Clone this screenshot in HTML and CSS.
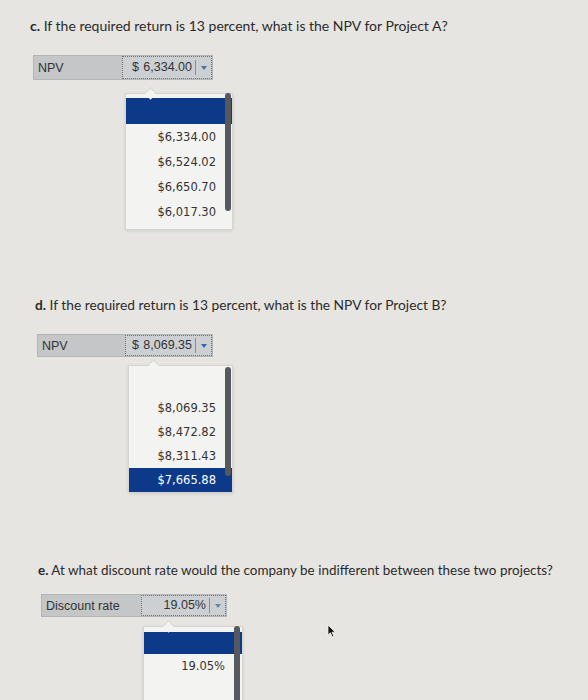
FILE: index.html
```html
<!DOCTYPE html>
<html lang="en">
<head>
<meta charset="utf-8">
<title>NPV questions</title>
<link rel="stylesheet" href="styles.css">
</head>
<body>
<main class="page">
  <section class="q q-c">
    <p class="q-text"><b>c.</b> If the required return is 13 percent, what is the NPV for Project A?</p>
    <div class="field">
      <div class="field-label">NPV</div>
      <div class="field-value"><span class="val">$ 6,334.00</span><span class="arrow"></span></div>
    </div>
    <div class="menu">
      <ul class="opts">
        <li class="opt opt-blank sel"></li>
        <li class="opt">$6,334.00</li>
        <li class="opt">$6,524.02</li>
        <li class="opt">$6,650.70</li>
        <li class="opt">$6,017.30</li>
      </ul>
      <div class="scroll"></div>
    </div>
  </section>

  <section class="q q-d">
    <p class="q-text"><b>d.</b> If the required return is 13 percent, what is the NPV for Project B?</p>
    <div class="field">
      <div class="field-label">NPV</div>
      <div class="field-value"><span class="val">$ 8,069.35</span><span class="arrow"></span></div>
    </div>
    <div class="menu">
      <ul class="opts">
        <li class="opt opt-blank"></li>
        <li class="opt">$8,069.35</li>
        <li class="opt">$8,472.82</li>
        <li class="opt">$8,311.43</li>
        <li class="opt sel">$7,665.88</li>
      </ul>
      <div class="scroll"></div>
    </div>
  </section>

  <section class="q q-e">
    <p class="q-text"><b>e.</b> At what discount rate would the company be indifferent between these two projects?</p>
    <div class="field">
      <div class="field-label">Discount rate</div>
      <div class="field-value"><span class="val">19.05%</span><span class="arrow"></span></div>
    </div>
    <div class="menu">
      <ul class="opts">
        <li class="opt opt-blank sel"></li>
        <li class="opt">19.05%</li>
        <li class="opt"></li>
      </ul>
      <div class="scroll"></div>
    </div>
  </section>

  <svg class="cursor" width="9" height="14" viewBox="0 0 9 14" aria-hidden="true">
    <path d="M1 1 L1 11 L3.4 8.8 L5.2 12.8 L6.8 12.1 L5 8.2 L8.2 8.2 Z" fill="#111" stroke="#f4f4f4" stroke-width="0.8"/>
  </svg>
</main>
</body>
</html>
```

FILE: styles.css
```css
html, body {
  margin: 0;
  height: 100%;
  overflow: hidden;
}

body {
  background: #e6e5e1;
  color: #2d2d2d;
  font-family: Lato, "Open Sans", Arial, sans-serif;
}

.page {
  position: relative;
  padding-top: 17px;
  height: 683px;
}

.q-text {
  margin: 0;
  font-size: 14px;
  line-height: 18px;
  color: #2b2b2b;
  white-space: nowrap;
}

.q-text b {
  font-weight: 700;
}

/* field bar */
.field {
  display: flex;
  font-family: "Liberation Sans", Arial, sans-serif;
  font-size: 12.5px;
  color: #333;
  border: 1px solid #b3b5b7;
  box-sizing: border-box;
}

.field-label {
  background: #c4c6c8;
  padding-left: 4px;
  display: flex;
  align-items: center;
  box-sizing: border-box;
}

.field-value {
  background: #cdd0d3;
  border: 1px dotted #6f7175;
  display: flex;
  align-items: center;
  justify-content: flex-end;
  box-sizing: border-box;
}

.val {
  padding-right: 3px;
  border-right: 1px solid #8a8c90;
  line-height: 15px;
  word-spacing: 1px;
}

.arrow {
  width: 15px;
  display: flex;
  justify-content: center;
  align-items: center;
}

.arrow::after {
  content: "";
  border-left: 3.5px solid transparent;
  border-right: 3.5px solid transparent;
  border-top: 4px solid #4d6fa3;
}

/* dropdown menu */
.menu {
  position: relative;
  background: #f3f3f1;
  border: 1px solid #d4d4d1;
  box-sizing: border-box;
  box-shadow: 0 1px 3px rgba(0, 0, 0, 0.1);
}

.menu::before {
  content: "";
  position: absolute;
  top: -5px;
  width: 8px;
  height: 8px;
  background: #f3f3f1;
  border-top: 1px solid #d4d4d1;
  border-left: 1px solid #d4d4d1;
  transform: rotate(45deg);
}

.opts {
  list-style: none;
  margin: 0;
  padding: 0;
  font-family: "DejaVu Sans", Verdana, sans-serif;
  font-size: 11.5px;
  color: #333;
}

.opt {
  padding-right: 16px;
  display: flex;
  align-items: center;
  justify-content: flex-end;
}

.opt.sel {
  background: #0d3a88;
  color: #fff;
}

.scroll {
  position: absolute;
  width: 6px;
  background: #55595f;
  border-radius: 3px;
}

.cursor {
  position: absolute;
  left: 327px;
  top: 624px;
}

/* question c */
.q-c .q-text { margin-left: 30px; }
.q-c .field { margin: 20px 0 0 33px; width: 180px; height: 25px; }
.q-c .field-label { width: 89px; }
.q-c .field-value { width: 91px; }
.q-c .menu { margin: 13px 0 0 125px; width: 108px; height: 137px; padding: 4px 0 7px; }
.q-c .menu::before { left: 20px; }
.q-c .opt { height: 25px; }
.q-c .opt-blank { height: 26px; }
.q-c .scroll { right: 1px; top: -1px; height: 118px; }

/* question d */
.q-d .q-text { margin: 66px 0 0 35px; font-size: 13.75px; }
.q-d .field { margin: 20px 0 0 37px; width: 176px; height: 23px; }
.q-d .field-label { width: 88px; }
.q-d .field-value { width: 88px; }
.q-d .arrow::after { border-top-color: #2f68b8; }
.q-d .menu { margin: 8px 0 0 128px; width: 105px; height: 128px; padding: 4px 0 2px; }
.q-d .menu::before { left: 20px; }
.q-d .opt { height: 24px; }
.q-d .opt-blank { height: 26px; }
.q-d .scroll { right: 1px; top: 1px; height: 109px; }

/* question e */
.q-e .q-text { margin: 68px 0 0 38px; font-size: 13.45px; }
.q-e .field { margin: 15px 0 0 41px; width: 186px; height: 23px; }
.q-e .field-label { width: 100px; }
.q-e .field-value { width: 86px; }
.q-e .arrow::after { border-top-color: #6a86b0; }
.q-e .menu { margin: 9px 0 0 143px; width: 100px; height: 90px; padding: 5px 0 0; }
.q-e .menu::before { left: 20px; }
.q-e .opt { height: 23px; padding-right: 17px; }
.q-e .opt-blank { height: 22px; }
.q-e .scroll { right: 2px; top: -1px; height: 92px; }
```
